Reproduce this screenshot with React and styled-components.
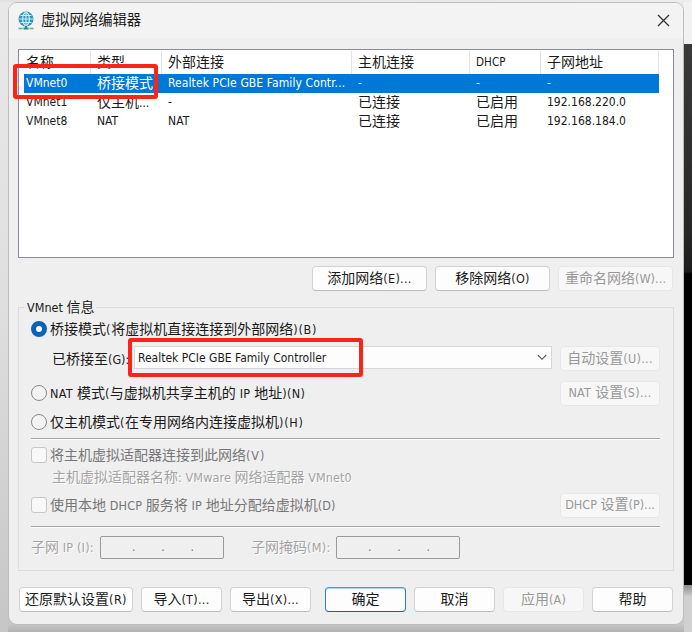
import React from 'react';
import styled, { createGlobalStyle, css } from 'styled-components';

const GlobalStyle = createGlobalStyle`
	* {
		box-sizing: border-box;
	}
	body {
		margin: 0;
		overflow: hidden;
	}
`;

const Desktop = styled.div`
	width: 692px;
	height: 632px;
	padding: 2px 8px 7px;
	font-family: 'DejaVu Sans Condensed', 'Noto Sans CJK SC', sans-serif;
	color: #1a1a1a;
	background:
		linear-gradient(#3a3a3a, #262626 35%, #1c1c1c 42%, #000 42.5%, #000) 684px 44px / 8px 541px no-repeat,
		linear-gradient(#8c8c8c, #d0d0d0 12px, #d0d0d0) 684px 585px / 8px 47px no-repeat,
		linear-gradient(#c4c4c4, #b2b2b2) 8px 625px / 676px 7px no-repeat,
		linear-gradient(90deg, #e2e2e2, #ececec) 0 0 / 100% 2px no-repeat,
		linear-gradient(#f1f1f1, #f1f1f1) 684px 0 / 8px 44px no-repeat,
		linear-gradient(#e9e9e9, #dedede 50%, #c6c6c6);
`;

const Window = styled.div`
	width: 676px;
	height: 623px;
	border: 1px solid #bdbdbd;
	border-radius: 9px;
	background: #efefef;
	overflow: hidden;
`;

const TitleBar = styled.header`
	display: flex;
	align-items: center;
	height: 35px;
	padding: 0 13px 0 9px;
	background: #f3f3f3;
`;

const Title = styled.div`
	flex: 1;
	margin: -3px 0 0 7px;
`;

const Content = styled.main`
	padding: 11px 9px 0;
`;

const Latin = styled.span`
	font-size: ${(p) => p.$size}px;
	letter-spacing: ${(p) => p.$track}px;
`;

const Han = styled.span`
	font-family: 'Noto Sans CJK SC', sans-serif;
	font-size: ${(p) => p.$size}px;
`;

const Line = styled.span`
	display: inline-block;
	line-height: 18px;
	white-space: pre;
	${(p) => p.$dim && css`
		color: #a3a3a3;
		text-shadow: 1px 1px 0 #fff;
	`}
`;

// Chinese and latin runs have different sizes in the dialog font
function Text({ children, size = 12.5, han = 14, track = 0.1, dim }) {
	const runs = children.match(/[\u4e00-\u9fff]+|[^\u4e00-\u9fff]+/g);
	return (
		<Line $dim={dim}>
			{runs.map((run, i) =>
				/[\u4e00-\u9fff]/.test(run) ? (
					<Han key={i} $size={han}>{run}</Han>
				) : (
					<Latin key={i} $size={size} $track={track}>{run}</Latin>
				)
			)}
		</Line>
	);
}

const List = styled.section`
	position: relative;
	width: 656px;
	height: 209px;
	border: 1px solid #888b98;
	background: #fff;
`;

const Row = styled.div`
	display: grid;
	grid-template-columns: 67px 71px 190px 118px 71px 118px;
	align-items: center;
	width: 635px;
	height: 19px;
	margin-left: 5px;
	${(p) => p.$selected && css`
		background: #0078d7;
		color: #fff;
	`}
`;

const HeadRow = styled(Row)`
	height: 23px;
	margin-top: 1px;
`;

const Cell = styled.div`
	height: 100%;
	padding-left: ${(p) => (p.$first ? 2 : 6)}px;
	line-height: 16px;
	white-space: nowrap;

	${Line} {
		line-height: 16px;
	}
`;

const HeadCell = styled(Cell)`
	padding-top: 2px;
	border-right: 1px solid #e3e3e3;
`;

const Highlight = styled.div`
	position: absolute;
	left: ${(p) => p.$x}px;
	top: ${(p) => p.$y}px;
	width: ${(p) => p.$w}px;
	height: ${(p) => p.$h}px;
	border: 4px solid #fc2318;
	border-radius: 3px;
`;

const ButtonRow = styled.div`
	display: flex;
	justify-content: flex-end;
	gap: 8px;
	margin: 8px 1px 0 0;
`;

const Button = styled.button`
	display: flex;
	align-items: center;
	justify-content: center;
	width: ${(p) => p.$w}px;
	height: 25px;
	margin: 0;
	padding: 0 0 2px;
	border: 1px solid #d2d2d2;
	border-bottom-color: #bcbcbc;
	border-radius: 4px;
	background: #fdfdfd;
	color: #1a1a1a;
	font-family: inherit;
	${(p) => p.$primary && css`
		border-color: #4c9ddd #2c80c8 #0067c0;
		box-shadow: inset 0 1px 0 #a9d2f2;
	`}
	&:disabled {
		border-color: #e7e7e7;
		background: #f7f7f7;
		color: #999;
	}
`;

const Group = styled.fieldset`
	width: 656px;
	height: 273px;
	margin: 7px 0 0;
	padding: 0 12px;
	border: 1px solid #dcdcdc;
`;

const Legend = styled.legend`
	height: 18px;
	margin-left: -6px;
	padding: 0 2px;
	line-height: 16px;

	${Line} {
		line-height: 16px;
	}
`;

const Field = styled.div`
	display: flex;
	align-items: center;
	height: ${(p) => p.$h}px;
	padding-left: ${(p) => p.$indent || 0}px;
	color: ${(p) => (p.$muted ? '#777' : 'inherit')};
`;

const Push = styled.div`
	margin-left: auto;
	margin-right: 1px;
`;

const Radio = styled.span`
	flex: none;
	width: 16px;
	height: 16px;
	margin-right: 3px;
	border: ${(p) => (p.$on ? '5px solid #0a63b8' : '1px solid #8a8a8a')};
	border-radius: 50%;
	background: ${(p) => (p.$on ? '#fff' : '#f3f3f3')};
`;

const Check = styled.span`
	flex: none;
	width: 16px;
	height: 16px;
	margin-right: 3px;
	border: 1px solid #c6c6c6;
	border-radius: 3px;
	background: #f8f8f8;
`;

const ComboLabel = styled.div`
	width: 82px;
`;

const Combo = styled.div`
	position: relative;
	display: flex;
	align-items: center;
	justify-content: space-between;
	width: 418px;
	height: 23px;
	margin-bottom: 2px;
	padding: 0 4px 1px 3px;
	border: 1px solid #d6d6d6;
	background: #fdfdfd;
`;

const Separator = styled.div`
	height: 2px;
	margin: ${(p) => p.$top || 0}px 1px 0 0;
	border-top: 1px solid #a6a6a6;
	border-bottom: 1px solid #fafafa;
`;

const IpLabel = styled.div`
	width: ${(p) => p.$w}px;
	margin-left: ${(p) => p.$left || 0}px;
`;

const IpBox = styled.div`
	display: grid;
	grid-template-columns: repeat(3, 29.3px);
	width: 124px;
	height: 23px;
	padding-left: 31px;
	border: 1px solid #999;
	border-radius: 2px;
	color: #777;
	font-size: 12px;
	line-height: 20px;
`;

const Footer = styled.footer`
	display: flex;
	gap: 8px;
	margin: 16px 0 0 1px;
`;

const Spacer = styled.div`
	width: 6px;
	margin-right: -8px;
`;

const GlobeIcon = () => (
	<svg width="16" height="19" viewBox="0 0 16 19" fill="none">
		<circle cx="8" cy="8" r="7.5" fill="#2f93bf" />
		<g stroke="#c9f1fa" strokeWidth="1.2">
			<ellipse cx="8" cy="8" rx="3.4" ry="6.5" />
			<path d="M8 1.5v13M1 8h14M2.5 4.5h11M2.5 11.5h11" />
		</g>
		<path d="M8 15v2" stroke="#2586b5" strokeWidth="2" />
		<path d="M.5 17.5h4M11.5 17.5h4" stroke="#69a99b" strokeWidth="1.5" />
		<path d="M5.5 17.5h5" stroke="#238b84" strokeWidth="2" />
	</svg>
);

const CloseIcon = () => (
	<svg width="13" height="13" viewBox="0 0 13 13" stroke="#333" strokeWidth="1.3">
		<path d="M1 1l11 11M12 1L1 12" />
	</svg>
);

const ChevronIcon = () => (
	<svg width="10" height="7" viewBox="0 0 10 7" fill="none" stroke="#555" strokeWidth="1.1">
		<path d="M.8 1L5 5.3 9.2 1" />
	</svg>
);

const columns = ['名称', '类型', '外部连接', '主机连接', 'DHCP', '子网地址'];

const networks = [
	['VMnet0', '桥接模式', 'Realtek PCIe GBE Family Contr...', '-', '-', '-'],
	['VMnet1', '仅主机...', '-', '已连接', '已启用', '192.168.220.0'],
	['VMnet8', 'NAT', 'NAT', '已连接', '已启用', '192.168.184.0'],
];

const IpAddress = () => (
	<IpBox>
		<span>.</span>
		<span>.</span>
		<span>.</span>
	</IpBox>
);

function NetworkList() {
	return (
		<List>
			<HeadRow>
				{columns.map((name, i) => (
					<HeadCell key={name} $first={i === 0}>
						<Text size={11.5}>{name}</Text>
					</HeadCell>
				))}
			</HeadRow>
			{networks.map((cells, r) => (
				<Row key={cells[0]} $selected={r === 0}>
					{cells.map((value, i) => (
						<Cell key={i} $first={i === 0}>
							<Text size={12} track={i === 2 ? 0.1 : 0}>{value}</Text>
						</Cell>
					))}
				</Row>
			))}
			<Highlight $x={-6} $y={14} $w={145} $h={35} />
		</List>
	);
}

function App() {
	return (
		<Desktop>
			<GlobalStyle />
			<Window>
				<TitleBar>
					<GlobeIcon />
					<Title>
						<Text han={14.3}>虚拟网络编辑器</Text>
					</Title>
					<CloseIcon />
				</TitleBar>
				<Content>
					<NetworkList />
					<ButtonRow>
						<Button $w={115}><Text track={0.3}>添加网络(E)...</Text></Button>
						<Button $w={115}><Text track={0.3}>移除网络(O)</Text></Button>
						<Button $w={115} disabled><Text>重命名网络(W)...</Text></Button>
					</ButtonRow>
					<Group>
						<Legend><Text track={0}>VMnet 信息</Text></Legend>
						<Field $h={26}>
							<Radio $on />
							<Text track={0.8}>桥接模式(将虚拟机直接连接到外部网络)(B)</Text>
						</Field>
						<Field $h={33} $indent={21}>
							<ComboLabel><Text track={0}>已桥接至(G):</Text></ComboLabel>
							<Combo>
								<Text size={12} track={0}>Realtek PCIe GBE Family Controller</Text>
								<ChevronIcon />
								<Highlight $x={-7} $y={-9} $w={235} $h={39} />
							</Combo>
							<Push><Button $w={100} disabled><Text track={0.3}>自动设置(U)...</Text></Button></Push>
						</Field>
						<Field $h={36}>
							<Radio />
							<Text track={0.35}>NAT 模式(与虚拟机共享主机的 IP 地址)(N)</Text>
							<Push><Button $w={100} disabled><Text track={0.3}>NAT 设置(S)...</Text></Button></Push>
						</Field>
						<Field $h={21}>
							<Radio />
							<Text track={0.7}>仅主机模式(在专用网络内连接虚拟机)(H)</Text>
						</Field>
						<Separator $top={6} />
						<Field $h={30} $muted>
							<Check />
							<Text track={0.9}>将主机虚拟适配器连接到此网络(V)</Text>
						</Field>
						<Field $h={14} $indent={21}>
							<Text dim>主机虚拟适配器名称: VMware 网络适配器 VMnet0</Text>
						</Field>
						<Field $h={42} $muted>
							<Check />
							<Text track={0.15}>使用本地 DHCP 服务将 IP 地址分配给虚拟机(D)</Text>
							<Push><Button $w={100} disabled><Text track={0}>DHCP 设置(P)...</Text></Button></Push>
						</Field>
						<Separator />
						<Field $h={38}>
							<IpLabel $w={69}><Text dim track={0.2}>子网 IP (I):</Text></IpLabel>
							<IpAddress />
							<IpLabel $w={85} $left={27}><Text dim track={0.3}>子网掩码(M):</Text></IpLabel>
							<IpAddress />
						</Field>
					</Group>
					<Footer>
						<Button $w={114}><Text track={0.4}>还原默认设置(R)</Text></Button>
						<Button $w={81}><Text track={0.3}>导入(T)...</Text></Button>
						<Button $w={81}><Text track={0.3}>导出(X)...</Text></Button>
						<Spacer />
						<Button $w={81} $primary><Text>确定</Text></Button>
						<Button $w={81}><Text>取消</Text></Button>
						<Button $w={81} disabled><Text>应用(A)</Text></Button>
						<Button $w={81}><Text>帮助</Text></Button>
					</Footer>
				</Content>
			</Window>
		</Desktop>
	);
}

export default App;
